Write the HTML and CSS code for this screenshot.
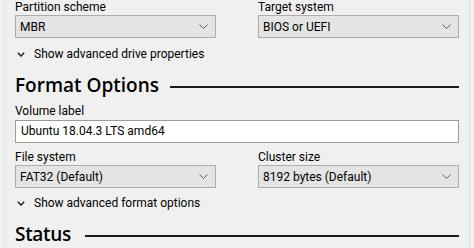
FILE: index.html
```html
<!DOCTYPE html>
<html>
<head>
<meta charset="utf-8">
<link rel="stylesheet" href="styles.css">
</head>
<body>
<div class="window">
  <div class="row2">
    <div class="field">
      <div class="label">Partition scheme</div>
      <div class="combo"><span>MBR</span><svg class="caret" width="9" height="5" viewBox="0 0 9 5"><polyline points="0.5,0.5 4.5,4.5 8.5,0.5" fill="none" stroke="#5a5a5a" stroke-width="1"/></svg></div>
    </div>
    <div class="field">
      <div class="label">Target system</div>
      <div class="combo"><span>BIOS or UEFI</span><svg class="caret" width="9" height="5" viewBox="0 0 9 5"><polyline points="0.5,0.5 4.5,4.5 8.5,0.5" fill="none" stroke="#5a5a5a" stroke-width="1"/></svg></div>
    </div>
  </div>
  <div class="toggle toggle-drive"><svg class="chev" width="8" height="5" viewBox="0 0 8 5"><polyline points="0.8,0.8 4,4 7.2,0.8" fill="none" stroke="#222" stroke-width="1.5"/></svg><span>Show advanced drive properties</span></div>

  <div class="heading heading-format"><span class="htext">Format Options</span><span class="rule"></span></div>

  <div class="field field-volume">
    <div class="label">Volume label</div>
    <div class="input">Ubuntu 18.04.3 LTS amd64</div>
  </div>

  <div class="row2 row-fs">
    <div class="field">
      <div class="label">File system</div>
      <div class="combo"><span>FAT32 (Default)</span><svg class="caret" width="9" height="5" viewBox="0 0 9 5"><polyline points="0.5,0.5 4.5,4.5 8.5,0.5" fill="none" stroke="#5a5a5a" stroke-width="1"/></svg></div>
    </div>
    <div class="field">
      <div class="label">Cluster size</div>
      <div class="combo"><span>8192 bytes (Default)</span><svg class="caret" width="9" height="5" viewBox="0 0 9 5"><polyline points="0.5,0.5 4.5,4.5 8.5,0.5" fill="none" stroke="#5a5a5a" stroke-width="1"/></svg></div>
    </div>
  </div>
  <div class="toggle toggle-format"><svg class="chev" width="8" height="5" viewBox="0 0 8 5"><polyline points="0.8,0.8 4,4 7.2,0.8" fill="none" stroke="#222" stroke-width="1.5"/></svg><span>Show advanced format options</span></div>

  <div class="heading heading-status"><span class="htext">Status</span><span class="rule"></span></div>
</div>
</body>
</html>
```

FILE: styles.css
```css
html, body {
  margin: 0;
  padding: 0;
  background: #f0f0f0;
  overflow: hidden;
}
body {
  width: 474px;
  height: 248px;
  font-family: Roboto, "Noto Sans", sans-serif;
  font-size: 12px;
  color: #000;
}
.window {
  margin: 0 4px;
  height: 248px;
  border-left: 1px solid #e4e4e4;
  border-right: 1px solid #dadada;
  padding: 0 10px;
  box-sizing: border-box;
}
.row2 {
  display: grid;
  grid-template-columns: 201px 201px;
  column-gap: 42px;
}
.label {
  height: 15px;
  line-height: 15px;
  white-space: nowrap;
}
.combo {
  height: 23px;
  box-sizing: border-box;
  background: #e4e4e4;
  border: 1px solid #adadad;
  display: flex;
  align-items: center;
  justify-content: space-between;
  padding: 0 7px 0 4px;
  white-space: nowrap;
}
.caret {
  display: block;
  flex: none;
}
.toggle {
  display: flex;
  align-items: center;
  height: 15px;
  line-height: 15px;
  padding-left: 2px;
  gap: 9px;
  white-space: nowrap;
}
.toggle-drive { margin-top: 9px; }
.toggle-format { margin-top: 8px; }
.chev { display: block; flex: none; }
.heading {
  display: flex;
  align-items: center;
  height: 26px;
  gap: 11px;
}
.heading-format { margin-top: 10px; }
.heading-status { margin-top: 10px; }
.htext {
  font-family: "Open Sans", "Noto Sans", sans-serif;
  font-weight: 600;
  font-size: 19px;
  line-height: 26px;
  white-space: nowrap;
}
.heading-status .htext { letter-spacing: -0.3px; }
.heading-status { gap: 14px; }
.rule {
  flex: 1;
  height: 2px;
  background: #1a1a1a;
  margin-top: 4px;
}
.field-volume { margin-top: 6px; }
.field-volume .label { margin-bottom: 1px; }
.input {
  height: 23px;
  box-sizing: border-box;
  background: #fff;
  border: 1px solid #9c9c9c;
  padding: 0 5px;
  line-height: 21px;
  white-space: nowrap;
}
.row-fs { margin-top: 7px; }
```
